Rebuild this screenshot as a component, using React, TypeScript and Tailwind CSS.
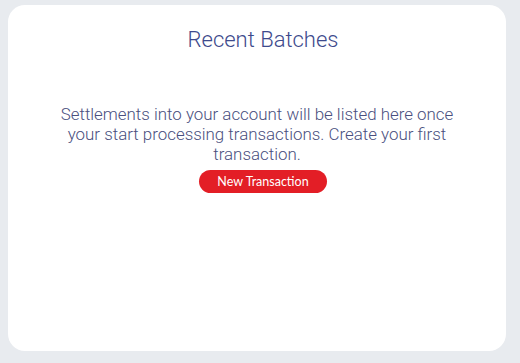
export default function App() {
  return (
    <div className="w-[520px] h-[363px] bg-[#e8ebef] pt-[5px] pl-2">
      <div className="w-[498px] h-[346px] rounded-[17px] bg-white flex flex-col items-center pt-[22px]" style={{ fontFamily: "Roboto, 'Open Sans', sans-serif" }}>
        <h1 className="pl-3 text-[22px] leading-[26px] font-light text-[#3d4a8c]">Recent Batches</h1>
        <p className="mt-[51px] w-[404px] text-center text-[16.9px] leading-[20px] font-light text-[#4a4f7e]">
          Settlements into your account will be listed here once your start processing transactions. Create your first transaction.
        </p>
        <div className="pl-3 mt-[5px]">
          <button className="w-[128px] h-[23px] rounded-full bg-[#e31e26] text-white text-[12.5px] leading-[23px]" style={{ fontFamily: "Lato, sans-serif" }}>
            New Transaction
          </button>
        </div>
      </div>
    </div>
  );
}
